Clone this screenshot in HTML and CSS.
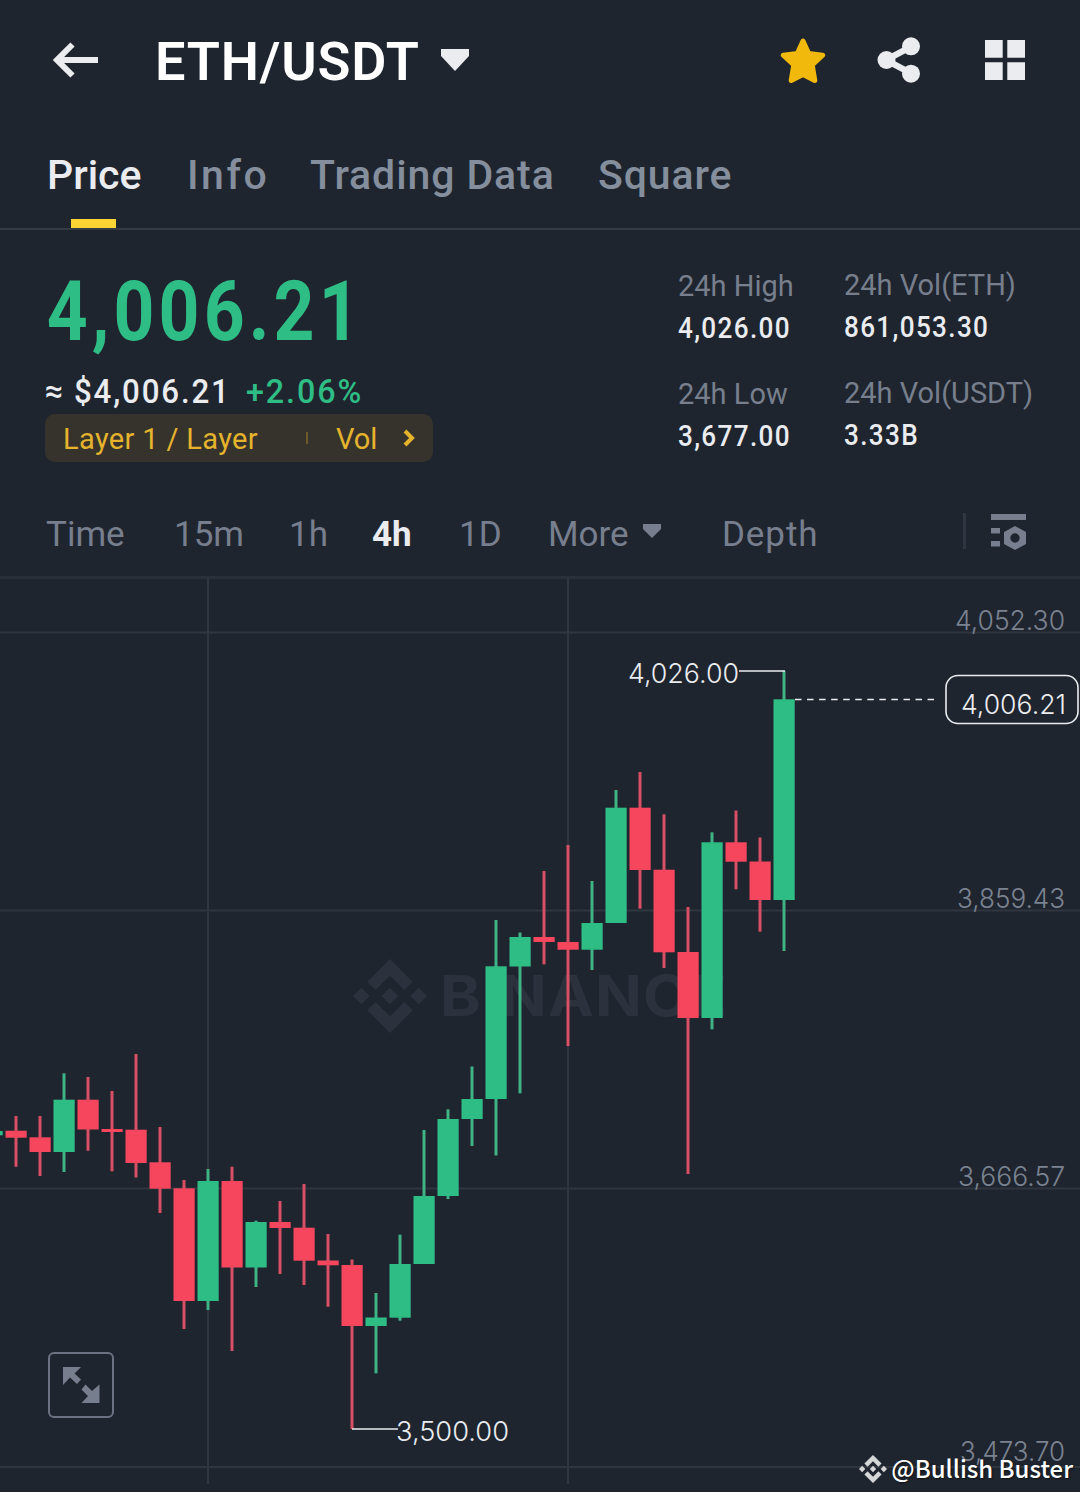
FILE: index.html
```html
<!DOCTYPE html>
<html lang="en">
<head>
    <meta charset="UTF-8">
    <meta name="viewport" content="width=device-width, initial-scale=1.0">
    <title>ETH/USDT</title>
    <link rel="stylesheet" href="styles.css">
</head>
<body>
    <header class="header">
        <svg class="back" width="46" height="40" viewBox="0 0 46 40">
            <path d="M46 20H5M20.500 4.500L5 20l15.500 15.500" fill="none" stroke="#eaecef" stroke-width="6"/>
        </svg>
        <h1 class="pair">ETH/USDT</h1>
        <svg class="pair-caret" width="28" height="22" viewBox="0 0 28 22">
            <path d="M0 0h28v7L14 22 0 7z" fill="#eaecef"/>
        </svg>
        <div class="header-icons">
            <svg width="46" height="48" viewBox="0 0 46 48">
                <path d="M23 5l5.700 12.500 14 1.700-10.500 9.800 2.600 15.500L23 38.500l-11.800 6 2.600-15.500L3.300 19.200l14-1.700z" fill="#f0b90b" stroke="#f0b90b" stroke-width="5" stroke-linejoin="round"/>
            </svg>
            <svg width="44" height="46" viewBox="0 0 44 46">
                <path d="M34.500 9.500L9 23l25.500 13.500" fill="none" stroke="#eaecef" stroke-width="6.500"/>
                <circle cx="9.500" cy="23" r="9"/>
                <circle cx="34" cy="9.300" r="9"/>
                <circle cx="34" cy="36.700" r="9"/>
            </svg>
            <svg width="40" height="40" viewBox="0 0 40 40">
                <path d="M0 0h17.700v17.700H0zM22.300 0H40v17.700H22.300zM0 22.300h17.700V40H0zM22.300 22.300H40V40H22.300z"/>
            </svg>
        </div>
    </header>

    <nav class="tabs">
        <a class="tab active">Price</a>
        <a class="tab info">Info</a>
        <a class="tab">Trading Data</a>
        <a class="tab">Square</a>
    </nav>

    <section class="summary">
        <div class="price-block">
            <div class="price">4,006.21</div>
            <div class="fiat">
                <span class="approx">≈</span>
                <span class="fiat-value">$4,006.21</span>
                <span class="change">+2.06%</span>
            </div>
            <div class="tags">
                <span class="tag-layer">Layer 1 / Layer</span>
                <span class="tag-line"></span>
                <span class="tag-vol">Vol</span>
                <svg width="12" height="18" viewBox="0 0 12 18">
                    <path d="M2 2l7 7-7 7" fill="none" stroke="#e5b32c" stroke-width="4"/>
                </svg>
            </div>
        </div>
        <div class="stats">
            <div class="stat">
                <div class="stat-label">24h High</div>
                <div class="stat-value">4,026.00</div>
            </div>
            <div class="stat">
                <div class="stat-label">24h Low</div>
                <div class="stat-value">3,677.00</div>
            </div>
        </div>
        <div class="stats stats-vol">
            <div class="stat">
                <div class="stat-label">24h Vol(ETH)</div>
                <div class="stat-value">861,053.30</div>
            </div>
            <div class="stat">
                <div class="stat-label">24h Vol(USDT)</div>
                <div class="stat-value">3.33B</div>
            </div>
        </div>
    </section>

    <div class="intervals">
        <span class="interval">Time</span>
        <span class="interval">15m</span>
        <span class="interval">1h</span>
        <span class="interval selected">4h</span>
        <span class="interval">1D</span>
        <span class="more">
            <span class="interval">More</span>
            <svg width="18" height="14" viewBox="0 0 18 14"><path d="M0 0h18v5L9 14 0 5z" fill="#777f8e"/></svg>
        </span>
        <span class="interval depth">Depth</span>
        <span class="interval-line"></span>
        <svg width="35" height="38" viewBox="0 -2 35 38">
            <path d="M0 0h35v6H0zM0 14h9v5.500H0zM0 27h9v5.500H0z" fill="#777f8e"/>
            <path d="M24 12l11 6v12l-11 6-11-6V18zm0 7.300a4.700 4.700 0 1 0 0 9.400 4.700 4.700 0 0 0 0-9.400z" fill="#777f8e" fill-rule="evenodd"/>
        </svg>
    </div>

    <main class="chart">
        <svg class="chart-svg" width="1080" height="913" viewBox="0 579 1080 913">
            <defs>
                <symbol id="logo" viewBox="0 0 24 24">
                    <path d="M16.624 13.920l2.718 2.716L12 23.988l-7.364-7.352 2.717-2.716L12 18.580zM21.260 9.284L24 12l-2.715 2.716L18.568 12zM11.988 9.285l2.717 2.691-2.717 2.717L9.272 12zM2.716 9.284L5.409 12l-2.692 2.692L0 12zM11.988.012l7.353 7.329-2.717 2.715-4.636-4.636-4.635 4.660-2.718-2.716z"/>
                </symbol>
            </defs>

            <g class="grid">
                <path d="M0 632.500H1080M0 910.500H1080M0 1188.500H1080M0 1467H1080"/>
                <path d="M208 579V1484M568 579V1484"/>
            </g>

            <g class="watermark">
                <use href="#logo" x="353" y="959" width="74" height="74"/>
                <text x="440" y="1016" textLength="288" lengthAdjust="spacingAndGlyphs">BINANCE</text>
            </g>

            <g id="candles"></g>

            <g class="axis">
                <text x="955" y="630" textLength="110" lengthAdjust="spacingAndGlyphs">4,052.30</text>
                <text x="957" y="908" textLength="108" lengthAdjust="spacingAndGlyphs">3,859.43</text>
                <text x="958" y="1186" textLength="107" lengthAdjust="spacingAndGlyphs">3,666.57</text>
                <text x="960" y="1461" textLength="105" lengthAdjust="spacingAndGlyphs">3,473.70</text>
            </g>

            <g class="marks">
                <path d="M739 671H785M352 1429H398"/>
                <path d="M795 699.500H934" stroke-dasharray="6.500 5.550"/>
                <rect x="946" y="675.500" width="132" height="48" rx="12"/>
                <text x="628" y="683" textLength="111" lengthAdjust="spacingAndGlyphs">4,026.00</text>
                <text x="961" y="714" textLength="105" lengthAdjust="spacingAndGlyphs">4,006.21</text>
                <text x="396" y="1441" textLength="113" lengthAdjust="spacingAndGlyphs">3,500.00</text>
            </g>
        </svg>

        <button class="expand">
            <svg width="38" height="38" viewBox="0 0 38 38">
                <path d="M0 1h18l-6.500 6.500 6.500 6-4 4.500-7-6.500L0 19zM22.500 18.500l6.500 6.500 7.500-6.500V37h-18l6.500-7-6.500-6.500z" fill="#777f8e"/>
            </svg>
        </button>

        <div class="credit">
            <svg width="28" height="28"><use href="#logo" width="28" height="28"/></svg>
            <span>@Bullish Buster</span>
        </div>
    </main>

    <script>
        // direction, high, body top, body bottom, low
        const candles = [
            ['up', 1131, 1131, 1135.3, 1135.3],
            ['down', 1116, 1130.7, 1137.7, 1166.7],
            ['down', 1116, 1137.3, 1152, 1176],
            ['up', 1073.3, 1099.7, 1152, 1172],
            ['down', 1077, 1099.7, 1129.5, 1150.7],
            ['down', 1091, 1129, 1132, 1171.3],
            ['down', 1054, 1129.7, 1163, 1177.5],
            ['down', 1127, 1162.3, 1188.7, 1213],
            ['down', 1180, 1188.3, 1301, 1329],
            ['up', 1169, 1181, 1301, 1310],
            ['down', 1166.7, 1181, 1267.5, 1351],
            ['up', 1220.7, 1222, 1267.5, 1287],
            ['down', 1201, 1222, 1228, 1274],
            ['down', 1184, 1227.7, 1260.7, 1285],
            ['down', 1234, 1260.5, 1265.3, 1306.7],
            ['down', 1259.5, 1265, 1326, 1429],
            ['up', 1293, 1317.5, 1326, 1373.3],
            ['up', 1234.7, 1264, 1317.7, 1320.7],
            ['up', 1130, 1196, 1264, 1264],
            ['up', 1109.3, 1119, 1196, 1199],
            ['up', 1066.5, 1099, 1119, 1146],
            ['up', 920, 966.3, 1099, 1155.5],
            ['up', 932.5, 937, 966.5, 1093.3],
            ['down', 871, 937, 942, 964.3],
            ['down', 845, 942, 949.7, 1046],
            ['up', 881, 923, 949.7, 970],
            ['up', 790, 807.7, 923, 923],
            ['down', 772, 807.7, 870, 908.7],
            ['down', 814.3, 869.7, 952.3, 968],
            ['down', 907, 952, 1018, 1174],
            ['up', 832.3, 842.3, 1018, 1029.3],
            ['down', 810.5, 842.3, 861.7, 889.3],
            ['down', 837.5, 861.5, 900, 931.7],
            ['up', 671, 699.3, 900, 951]
        ];

        document.getElementById('candles').innerHTML = candles.map(([dir, high, top, bottom, low], i) => {
            const x = 24 * i - 8;
            return `<g class="${dir}">
                <rect class="wick" x="${x - 1.5}" y="${high}" width="3" height="${low - high}"/>
                <rect x="${x - 10.5}" y="${top}" width="21.2" height="${bottom - top}"/>
            </g>`;
        }).join('');
    </script>
</body>
</html>
```
FILE: styles.css
```css
* {
    box-sizing: border-box;
}

body {
    margin: 0;
    width: 1080px;
    height: 1492px;
    overflow: hidden;
    background: #1f252f;
    color: #eaecef;
    font-family: Roboto, "Liberation Sans", sans-serif;
}

svg {
    display: block;
    flex: none;
}

.header {
    display: flex;
    align-items: center;
    height: 120px;
    padding: 0 55px 0 52px;
}

.pair {
    width: 286px;
    margin: 3px 0 0 57px;
    color: #fff;
    font-size: 54px;
    font-weight: 600;
    letter-spacing: 0.8px;
    white-space: nowrap;
}

.header-icons {
    display: flex;
    align-items: center;
    margin-left: auto;
    fill: #eaecef;
}

.header-icons svg + svg {
    margin-left: 51px;
}

.header-icons svg + svg + svg {
    margin-left: 64px;
}

.tabs {
    display: grid;
    grid-template-columns: 140px 123px 288px auto;
    height: 110px;
    padding: 27px 0 0 47px;
    border-bottom: 2px solid #333a44;
    color: #848e9c;
    font-size: 41px;
    font-weight: 500;
    line-height: 56px;
    letter-spacing: 0.9px;
}

.tabs .info {
    letter-spacing: 2.5px;
}

.tabs .active {
    position: relative;
    color: #eaecef;
    letter-spacing: 0;
}

.active::after {
    content: "";
    position: absolute;
    left: 24px;
    bottom: 0;
    width: 45px;
    height: 9px;
    background: #fcd535;
}

.summary {
    display: flex;
    height: 260px;
    padding: 34px 0 0 45px;
}

.price-block {
    width: 633px;
}

.price {
    height: 97px;
    padding-left: 2px;
    color: #2ebd85;
    font-size: 83px;
    font-weight: 700;
    line-height: 96px;
    letter-spacing: 4.8px;
    transform: scaleX(0.86);
    transform-origin: left;
}

.fiat {
    display: grid;
    grid-template-columns: 29px 172px auto;
    height: 53px;
    font-size: 34px;
    font-weight: 500;
    line-height: 60px;
}

.fiat-value,
.change {
    letter-spacing: 2px;
    transform: scaleX(0.92);
    transform-origin: left;
}

.approx {
    font-size: 32px;
}

.change {
    color: #2ebd85;
    transform: scaleX(0.95);
}

.tags {
    display: flex;
    align-items: center;
    width: 388px;
    height: 48px;
    padding: 0 17px 0 18px;
    border-radius: 10px;
    background: #35332c;
    color: #e5b32c;
    font-size: 29px;
    line-height: 34px;
}

.tag-layer {
    width: 243px;
    padding-top: 2px;
    letter-spacing: 0.35px;
}

.tag-line {
    width: 2px;
    height: 12px;
    background: #6d5a2b;
}

.tag-vol {
    width: 67px;
    margin-left: 28px;
    padding-top: 2px;
}

.stats {
    width: 166px;
    padding-top: 4px;
}

.stats-vol {
    width: 220px;
    padding-top: 3px;
}

.stat {
    height: 108px;
    white-space: nowrap;
}

.stat-label {
    height: 42px;
    color: #777f8c;
    font-size: 29px;
    line-height: 36px;
}

.stat-value {
    font-size: 29px;
    font-weight: 500;
    line-height: 36px;
    letter-spacing: 1.5px;
    transform: scaleX(0.9);
    transform-origin: left;
}

.intervals {
    display: grid;
    grid-template-columns: 128px 115px 83px 87px 89px 174px 241px 28px 35px;
    align-items: center;
    height: 89px;
    padding: 0 0 4px 46px;
    border-bottom: 3px solid #2a303a;
    color: #777f8e;
    font-size: 35px;
}

.interval {
    padding-top: 7px;
}

.selected {
    padding-top: 6px;
    color: #eaecef;
    font-weight: 700;
}

.depth {
    letter-spacing: 0.9px;
}

.more {
    display: flex;
    align-items: center;
    gap: 14px;
}

.interval-line {
    width: 3px;
    height: 36px;
    background: #2f3641;
}

.chart {
    position: relative;
    height: 913px;
    font-family: Inter, "Liberation Sans", sans-serif;
}

.grid path {
    fill: none;
    stroke: #2f3640;
    stroke-width: 2;
}

.watermark {
    fill: #2c323d;
    font-size: 57px;
    font-weight: 700;
    letter-spacing: 1px;
}

.up {
    fill: #2ebd85;
}

.down {
    fill: #f6465d;
}

.up .wick {
    fill: #3fb286;
}

.down .wick {
    fill: #d94f64;
}

.axis {
    fill: #7b8390;
    font-size: 26.5px;
    font-weight: 300;
}

.marks {
    fill: #eaecef;
    font-size: 26.5px;
    font-weight: 300;
}

.marks path,
.marks rect {
    fill: none;
    stroke: #eaecef;
    stroke-width: 1.6;
}

.expand {
    position: absolute;
    left: 48px;
    top: 773px;
    width: 66px;
    height: 66px;
    padding: 0 0 0 13px;
    border: 2px solid #6b7382;
    border-radius: 6px;
    background: none;
}

.credit {
    position: absolute;
    right: 7px;
    bottom: 9px;
    display: flex;
    align-items: center;
    gap: 4px;
    color: #fff;
    font-family: "Noto Sans CJK SC", sans-serif;
    font-size: 24px;
    font-weight: 500;
    line-height: 30px;
    text-shadow: 1px 1px 2px rgba(0, 0, 0, 0.6);
}

.credit span {
    margin-top: -2px;
}

.credit svg {
    fill: #d5d6d8;
}
```
